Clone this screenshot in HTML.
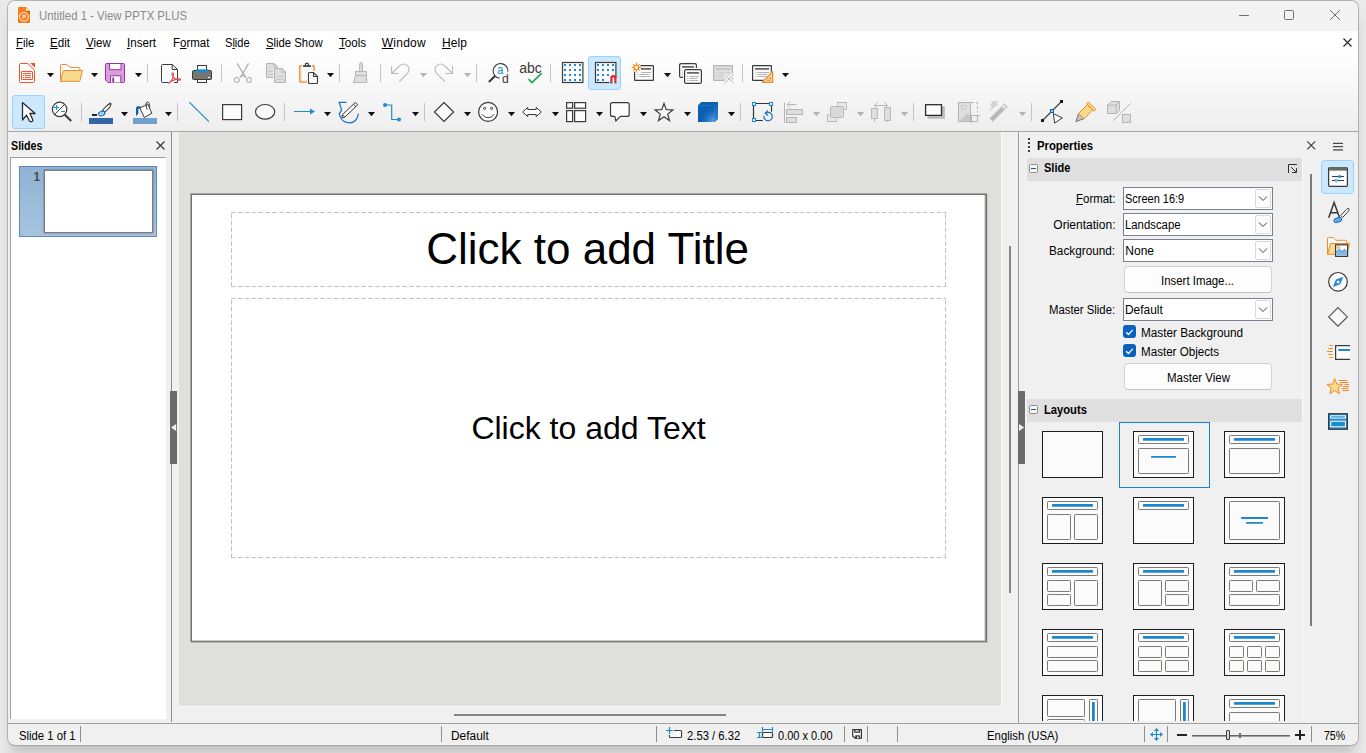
<!DOCTYPE html>
<html lang="en">
<head>
<meta charset="utf-8">
<title>Untitled 1 - View PPTX PLUS</title>
<style>
*{box-sizing:border-box;margin:0;padding:0}
html,body{width:1366px;height:753px;overflow:hidden}
body{background:#eaeaea;font-family:"Liberation Sans",sans-serif;font-size:12px;color:#000;position:relative}
.abs,.t,.ic,.sep,.dd{position:absolute}
#win{position:absolute;left:7px;top:0;width:1352px;height:746px;background:#f0f0f0;border:1px solid #b2b2b2;border-bottom-color:#a5a5a5;border-radius:8px;overflow:hidden;box-shadow:0 12px 14px -4px rgba(0,0,0,.18)}
#win>*{position:absolute}
/* everything inside #wrap uses page coordinates */
#wrap{left:-8px;top:-1px;width:1366px;height:753px}
#wrap>*{position:absolute}
#titlebar{left:8px;top:1px;width:1350px;height:30px;background:#f3f3f3}
#menubg{left:8px;top:31px;width:1350px;height:100px;background:linear-gradient(#ffffff 0,#fefefe 22px,#eeeeee 100%)}
#tbline{left:8px;top:131px;width:1350px;height:1px;background:#a6a6a6}
.t{white-space:nowrap;line-height:16px;font-size:12px;transform-origin:0 0}
.t u{text-decoration:underline;text-underline-offset:1px;text-decoration-thickness:1px}
.b{font-weight:bold}
.sep{width:1px;background:#c4c4c4}
.dd{width:0;height:0;border-left:3.5px solid transparent;border-right:3.5px solid transparent;border-top:4px solid #1a1a1a}
.dd.dis{border-top-color:#b0b0b0}
.ic{width:24px;height:24px;overflow:visible}
.hl{position:absolute;background:#cce8ff;border:1px solid #99d1ff;border-radius:3px}
#slidespanel{left:10px;top:157px;width:156px;height:562px;background:#fff;border-left:1px solid #a0a0a0;border-top:1px solid #a0a0a0}
#work{left:179px;top:132px;width:822px;height:574px;background:#dfdfde}
#slide{left:190px;top:193px;width:797px;height:449px;background:#fff;border:2px solid #6e6e6e;border-right-width:1px;border-bottom-width:1px;box-shadow:0 0 2px 0 rgba(0,0,0,.45)}
.ph{position:absolute;border:1px dashed #bdbdbd}
.combo{position:absolute;height:23px;width:150px;background:#fff;border:1px solid #7b8090}
.combo i{position:absolute;right:1px;top:1px;width:16px;height:19px;border:1px solid #d9d9d9;border-radius:2px;background:#fdfdfd}
.btn{position:absolute;background:#fdfdfd;border:1px solid #d2d2d2;border-radius:4px;border-bottom-color:#c2c2c2}
.band{position:absolute;background:#dfdfdf}
.cb{position:absolute;width:13px;height:13px;background:#0a62c0;border-radius:3px}
</style>
</head>
<body>
<div id="win"><div id="wrap">

<div id="titlebar"></div>
<div id="menubg"></div>
<div id="tbline"></div>
<!-- app icon -->
<svg class="abs" style="left:18px;top:7px" width="12" height="16" viewBox="0 0 12 16">
<path d="M1 0h7l4 4v11a1 1 0 0 1-1 1H1a1 1 0 0 1-1-1V1a1 1 0 0 1 1-1z" fill="#fb7c1b"/>
<path d="M8 0l4 4H8z" fill="#ffd3b0"/><path d="M8 4h4v2.500z" fill="#c85a0a"/>
<circle cx="5.900" cy="9.800" r="4.400" fill="none" stroke="#fff" stroke-width="1" opacity=".93"/>
<path d="M4.500 7.500h2.200a1.600 1.600 0 0 1 .3 3.100l-2.500 1.900z" fill="#ffd9bd" opacity=".85"/>
</svg>
<!-- window controls -->
<svg class="abs" style="left:1230px;top:1px" width="128" height="30" viewBox="0 0 128 30" fill="none" stroke="#6f6f6f" stroke-width="1">
<path d="M9 14.5h10"/><rect x="54.5" y="9.5" width="9" height="9" rx="1"/><path d="M100 9l10 10M110 9l-10 10"/>
</svg>
<!-- doc close -->
<svg class="abs" style="left:1341.500px;top:36.500px" width="11" height="11" viewBox="0 0 11 11" fill="none" stroke="#262626" stroke-width="1.100"><path d="M1.5 1.5l8 8M9.5 1.5l-8 8"/></svg>

<!-- slides panel -->
<svg class="abs" style="left:154.500px;top:139.500px" width="11" height="11" viewBox="0 0 11 11" fill="none" stroke="#333" stroke-width="1.1"><path d="M1.5 1.5l8 8M9.5 1.5l-8 8"/></svg>
<div id="slidespanel"></div>
<div class="abs" style="left:19px;top:166px;width:138px;height:71px;background:linear-gradient(#90b3d4,#a6c4df);border:1px solid #5f8ab5"></div>
<div class="abs" style="left:44px;top:170px;width:109px;height:63px;background:#fff;border:1px solid #7d7d7d;box-shadow:0 0 1.5px rgba(0,0,0,.6)"></div>
<!-- left splitter -->
<div class="abs" style="left:171px;top:132px;width:1px;height:590px;background:#8c8c8c"></div>
<div class="abs" style="left:170px;top:391px;width:7px;height:73px;background:#6b6b6b"></div>
<svg class="abs" style="left:170px;top:423px" width="7" height="9" viewBox="0 0 7 9"><path d="M6.2 1v7L1 4.5z" fill="#f2f2f2"/></svg>

<!-- workspace -->
<div id="work"></div>
<svg class="abs" style="left:188px;top:191px" width="802" height="454" viewBox="188 191 802 454" shape-rendering="crispEdges">
<rect x="191" y="194" width="796" height="448" fill="#fff"/>
<rect x="984" y="195" width="1" height="446" fill="#dcdcdc"/>
<rect x="192" y="640" width="794" height="1" fill="#c8c8c8"/>
<rect x="190" y="193" width="1" height="449" fill="#a6a6a4"/>
<rect x="190" y="193" width="797" height="1" fill="#a8a8a6"/>
<rect x="987" y="194" width="1" height="449" fill="#cbcbc9"/>
<rect x="191" y="642" width="797" height="1" fill="#b4b4b2"/>
<rect x="985" y="194" width="1" height="448" fill="#989898"/>
<rect x="191" y="194" width="1" height="448" fill="#727270"/>
<rect x="191" y="194" width="796" height="1" fill="#727270"/>
<rect x="986" y="194" width="1" height="448" fill="#727270"/>
<rect x="191" y="641" width="796" height="1" fill="#7c7c7a"/>
</svg>
<svg class="abs" style="left:228px;top:209px" width="722" height="353" viewBox="228 209 722 353" fill="none" stroke="#c1c1c1" stroke-width="1" stroke-dasharray="4.700 2.150">
<path d="M231 212.500h715M231 286.500h715M231 298.500h715M231 557.500h715"/>
<path d="M231.500 212v75M945.500 212v75M231.500 298v260M945.500 298v260" stroke-dashoffset="5.050"/>
</svg>
<!-- v scrollbar -->
<div class="abs" style="left:1001px;top:132px;width:17px;height:590px;background:#f0f0f0"></div>
<div class="abs" style="left:1009px;top:246px;width:2px;height:347px;background:#858585"></div>
<div class="abs" style="left:1001px;top:132px;width:1px;height:575px;background:#fbfbfb"></div>
<!-- h scrollbar -->
<div class="abs" style="left:179px;top:706px;width:822px;height:17px;background:#f0f0f0"></div>
<div class="abs" style="left:454px;top:714px;width:272px;height:2px;background:#858585"></div>
<div class="abs" style="left:179px;top:706px;width:823px;height:1px;background:#fbfbfb"></div>
<!-- right splitter -->
<div class="abs" style="left:1018px;top:132px;width:1px;height:591px;background:#a0a0a0"></div>
<div class="abs" style="left:1018px;top:391px;width:7px;height:73px;background:#6b6b6b"></div>
<svg class="abs" style="left:1018px;top:423px" width="7" height="9" viewBox="0 0 7 9"><path d="M1 1v7l5.2-3.5z" fill="#f2f2f2"/></svg>

<div class="hl" style="left:588px;top:56px;width:33px;height:34px"></div>
<div class="hl" style="left:12px;top:95px;width:33px;height:34px"></div>
<div class="sep" style="left:147px;top:64px;height:18px"></div>
<div class="sep" style="left:221px;top:64px;height:18px"></div>
<div class="sep" style="left:339px;top:64px;height:18px"></div>
<div class="sep" style="left:380px;top:64px;height:18px"></div>
<div class="sep" style="left:476px;top:64px;height:18px"></div>
<div class="sep" style="left:550px;top:64px;height:18px"></div>
<div class="sep" style="left:742px;top:64px;height:18px"></div>
<div class="sep" style="left:81px;top:103px;height:18px"></div>
<div class="sep" style="left:177px;top:103px;height:18px"></div>
<div class="sep" style="left:284px;top:103px;height:18px"></div>
<div class="sep" style="left:424px;top:103px;height:18px"></div>
<div class="sep" style="left:740px;top:103px;height:18px"></div>
<div class="sep" style="left:913px;top:103px;height:18px"></div>
<div class="sep" style="left:1031px;top:103px;height:18px"></div>
<svg class="abs" style="left:0;top:0" width="1366" height="132" viewBox="0 0 1366 132"><defs><radialGradient id="cubeg" cx="1" cy="1" r="1.05"><stop offset="0" stop-color="#6aaee6"/><stop offset=".45" stop-color="#2474c4"/><stop offset=".8" stop-color="#0a5fb0"/><stop offset="1" stop-color="#0a5fb0"/></radialGradient><linearGradient id="cubeh" x1="0" y1="0" x2="0" y2="1"><stop offset="0" stop-color="#0a5fb0"/><stop offset="1" stop-color="#3787d6"/></linearGradient></defs>
<path d="M47 73h7l-3.5 4.2z" fill="#111"/>
<path d="M91 73h7l-3.5 4.2z" fill="#111"/>
<path d="M135 73h7l-3.5 4.2z" fill="#111"/>
<path d="M327 73h7l-3.5 4.2z" fill="#111"/>
<path d="M664 73h7l-3.5 4.2z" fill="#111"/>
<path d="M782 73h7l-3.5 4.2z" fill="#111"/>
<path d="M420 73h7l-3.5 4.2z" fill="#b2b2b2"/>
<path d="M464 73h7l-3.5 4.2z" fill="#b2b2b2"/>
<path d="M121 112h7l-3.5 4.2z" fill="#111"/>
<path d="M165 112h7l-3.5 4.2z" fill="#111"/>
<path d="M324 112h7l-3.5 4.2z" fill="#111"/>
<path d="M368 112h7l-3.5 4.2z" fill="#111"/>
<path d="M412 112h7l-3.5 4.2z" fill="#111"/>
<path d="M464 112h7l-3.5 4.2z" fill="#111"/>
<path d="M508 112h7l-3.5 4.2z" fill="#111"/>
<path d="M552 112h7l-3.5 4.2z" fill="#111"/>
<path d="M596 112h7l-3.5 4.2z" fill="#111"/>
<path d="M640 112h7l-3.5 4.2z" fill="#111"/>
<path d="M684 112h7l-3.5 4.2z" fill="#111"/>
<path d="M728 112h7l-3.5 4.2z" fill="#111"/>
<path d="M813 112h7l-3.5 4.2z" fill="#b2b2b2"/>
<path d="M857 112h7l-3.5 4.2z" fill="#b2b2b2"/>
<path d="M901 112h7l-3.5 4.2z" fill="#b2b2b2"/>
<path d="M1019 112h7l-3.5 4.2z" fill="#b2b2b2"/>
<g fill="none" stroke="#e9572c"><path d="M20.2 63.5h7.6l6.7 6.7v11.3a1 1 0 0 1-1 1h-13.3a1 1 0 0 1-.7-1v-17a1 1 0 0 1 .7-1z" fill="#fdfdfd"/>
<path d="M30.2 63h4.8v4.8z" fill="#e8502a" stroke="none"/>
<rect x="21.5" y="71.5" width="11" height="8" rx=".4"/>
<path d="M23 73.6h8M24.6 75.6h6.4M24.6 77.6h6.4" stroke-width="1"/><path d="M23 75.1h1v1h-1zM23 77.1h1v1h-1z" fill="#e9572c" stroke="none"/></g>
<g stroke="#ee8733" stroke-linejoin="round"><path d="M60.5 81.3v-15.8a1 1 0 0 1 1-1h5.2l3.6 3h8.5a1 1 0 0 1 1 1v2" fill="#fcfcfc"/>
<path d="M60.5 81.3l2.9-10.8h19l-2.6 10.8z" fill="#f8dc8e"/></g>
<g><path d="M106.5 63.5h17a1 1 0 0 1 1 1v17a1 1 0 0 1-1 1h-15.5l-2.5-2.5v-15.5a1 1 0 0 1 1-1z" fill="#d99fe0" stroke="#9b2fa5"/>
<path d="M109.5 63.5h11.5v6.2h-11.5z" fill="#fcfcfc" stroke="#9b2fa5"/>
<path d="M110.5 82.5v-6.7h10.3v6.7" fill="#fcfcfc" stroke="#9b2fa5"/><rect x="112.3" y="77.5" width="1.8" height="5" fill="#9b2fa5"/></g>
<g fill="none"><path d="M174 82.5h3.5v-13l-5.2-5h-9.8a1 1 0 0 0-1 1v16a1 1 0 0 0 1 1h6" stroke="#3a3a38" fill="#fcfcfc"/><path d="M172.2 64.6v4.9h5.2" stroke="#3a3a38"/>
<path d="M168.5 83.6c2.6-2.2 5-6 5-9.6 0-1.600-1.500-1.600-1.500 0 0 3 3.500 6.200 7.600 6.200 1.300 0 1.300-1.300 0-1.300-3.800 0-8 1.600-11.100 4.700z" stroke="#e8474a" stroke-width="1.1"/></g>
<g><rect x="192.5" y="70.5" width="19" height="9" rx="1" fill="#777673" stroke="#3a3a38"/>
<rect x="197.5" y="65.5" width="9" height="5" fill="#fafafa" stroke="#3a3a38"/><rect x="196" y="69.3" width="12.400" height="3" fill="#1e8bcd"/>
<rect x="197.500" y="79.5" width="9" height="3" fill="#fafafa" stroke="#3a3a38"/><rect x="208" y="77" width="2" height="1" fill="#fff"/></g>
<g fill="none" stroke="#b0b0b0"><path d="M237.100 63.400l5.900 9.800 5.600-9.800" stroke-width="1.300"/><path d="M240.300 77.400l2.700-3.200 2.700 3.200" stroke-width="1.900"/><circle cx="236.800" cy="79.900" r="2.400" fill="#fbfbfb" stroke-width="1.100"/><circle cx="249" cy="79.900" r="2.400" fill="#fbfbfb" stroke-width="1.100"/></g>
<g stroke="#b4b4b4" fill="#dedede"><path d="M266.500 63.500h7.500l3.500 3.500v10.500h-11z"/><path d="M273.500 67.500h9l4 4v12h-13z" fill="#fbfbfb" stroke="none"/><path d="M274.500 68.500h7.500l3.500 3.500v10.500h-11z"/>
<path d="M268 71.500h5M268 74.500h5M276.500 76.500h7M276.500 79.500h7" stroke="#c6c6c6" fill="none"/><path d="M274 63.700v3.500h3.300zM282 68.700v3.500h3.300z" fill="#f2f2f2"/></g>
<g fill="none"><path d="M306.800 82h-6a1 1 0 0 1-1-1v-14.200a1 1 0 0 1 1-1h1M312.100 65.800h1a1 1 0 0 1 1 1v4.100" stroke="#ee8733" stroke-width="1.400"/>
<path d="M306.800 81h-5.500v-13.500M313.100 67.500v3.400" stroke="#fbe1a0" stroke-width=".8"/>
<rect x="303.100" y="65.100" width="7.800" height="1.800" fill="#3a3a38"/><circle cx="306.900" cy="64.600" r="1.500" fill="#f4f4f4" stroke="#3a3a38" stroke-width="1.100"/>
<path d="M308.500 82.500v-9a1 1 0 0 1 1-1h4l4 4v6a1 1 0 0 1-1 1h-7a1 1 0 0 1-1-1z" stroke="#3a3a38" stroke-width="1.100" fill="#fcfcfc"/><path d="M313.500 72.700v3.800h3.800" stroke="#3a3a38" stroke-width="1.100"/></g>
<g stroke="#b6b6b6" fill="#dedede"><path d="M359.700 71.500v-7.600a1.400 1.400 0 0 1 2.800 0v7.600"/><rect x="355.500" y="71.500" width="11" height="4"/><path d="M355.500 75.500h11l.4 7h-13.400z"/></g>
<path transform="translate(388,61)" d="M3.600 5.100v7.400h7.200M3.600 12.500l8.100-7.900a5.440 5.440 0 0 1 7.700 7.700l-8.100 8.400" fill="none" stroke="#b9b9b9" stroke-width="1.100"/>
<path transform="translate(456.1,61) scale(-1,1)" d="M3.600 5.100v7.400h7.200M3.600 12.500l8.100-7.900a5.440 5.440 0 0 1 7.700 7.700l-8.100 8.400" fill="none" stroke="#b9b9b9" stroke-width="1.100"/>
<g fill="none"><path d="M507.900 71.600a7.400 7.400 0 1 0-8.200 6.700" stroke="#3a3a38" stroke-width="1.100"/><path d="M495.200 75.700l-6.300 6.300" stroke="#3a3a38" stroke-width="2.100"/>
<text transform="translate(497.300 73.800) scale(.82 1)" font-family="Liberation Sans,sans-serif" font-size="13.300" fill="#1e8bcd">a</text><text transform="translate(502 83) scale(.9 1)" font-family="Liberation Sans,sans-serif" font-size="13.500" fill="#3a3a38">d</text></g>
<g><text x="519.200" y="72.700" font-family="Liberation Sans,sans-serif" font-size="14" fill="#3a3a38">abc</text><path d="M528.500 79.200l3.500 3.300 9.700-9.300" fill="none" stroke="#1aab4f" stroke-width="1.700"/></g>
<g><rect x="562.5" y="62.500" width="20.400" height="20" fill="#fcfcfc" stroke="#3a3a38" stroke-width="1.200"/><rect x="564.0" y="64" width="2" height="2" fill="#1e8bcd"/><rect x="569.0" y="64" width="2" height="2" fill="#1e8bcd"/><rect x="574.0" y="64" width="2" height="2" fill="#1e8bcd"/><rect x="579.0" y="64" width="2" height="2" fill="#1e8bcd"/><rect x="564.0" y="69" width="2" height="2" fill="#1e8bcd"/><rect x="569.0" y="69" width="2" height="2" fill="#1e8bcd"/><rect x="574.0" y="69" width="2" height="2" fill="#1e8bcd"/><rect x="579.0" y="69" width="2" height="2" fill="#1e8bcd"/><rect x="564.0" y="74" width="2" height="2" fill="#1e8bcd"/><rect x="569.0" y="74" width="2" height="2" fill="#1e8bcd"/><rect x="574.0" y="74" width="2" height="2" fill="#1e8bcd"/><rect x="579.0" y="74" width="2" height="2" fill="#1e8bcd"/><rect x="564.0" y="79" width="2" height="2" fill="#1e8bcd"/><rect x="569.0" y="79" width="2" height="2" fill="#1e8bcd"/><rect x="574.0" y="79" width="2" height="2" fill="#1e8bcd"/><rect x="579.0" y="79" width="2" height="2" fill="#1e8bcd"/></g>
<g><rect x="595.5" y="62.500" width="20.400" height="20" fill="#fcfcfc" stroke="#3a3a38" stroke-width="1.200"/><rect x="597.0" y="64" width="2" height="2" fill="#1e8bcd"/><rect x="602.0" y="64" width="2" height="2" fill="#1e8bcd"/><rect x="607.0" y="64" width="2" height="2" fill="#1e8bcd"/><rect x="612.0" y="64" width="2" height="2" fill="#1e8bcd"/><rect x="597.0" y="69" width="2" height="2" fill="#1e8bcd"/><rect x="602.0" y="69" width="2" height="2" fill="#1e8bcd"/><rect x="607.0" y="69" width="2" height="2" fill="#1e8bcd"/><rect x="612.0" y="69" width="2" height="2" fill="#1e8bcd"/><rect x="597.0" y="74" width="2" height="2" fill="#1e8bcd"/><rect x="602.0" y="74" width="2" height="2" fill="#1e8bcd"/><rect x="607.0" y="74" width="2" height="2" fill="#1e8bcd"/><rect x="597.0" y="79" width="2" height="2" fill="#1e8bcd"/><rect x="602.0" y="79" width="2" height="2" fill="#1e8bcd"/><rect x="609.5" y="78" width="7.500" height="6" fill="#fcfcfc"/><path d="M611.4 83.200v-5a2 2 0 0 1 4 0v5" fill="none" stroke="#e8212b" stroke-width="2.200"/><path d="M610.3 82.300h2.200v1.200h-2.200zM614.3 82.300h2.200v1.200h-2.200z" fill="#1e8bcd"/></g>
<g><rect x="634.6" y="65.6" width="18.8" height="14.8" rx="0.5" fill="#fcfcfc" stroke="#3a3a38" stroke-width="1.200"/><rect x="641" y="68" width="10" height="1.800" fill="#6b6965"/><rect x="641.5" y="72" width="9.5" height="1" fill="#b4b4b4"/><rect x="637.2" y="72" width="1" height="1" fill="#b4b4b4"/><rect x="639.2" y="74" width="10.3" height="1" fill="#b4b4b4"/><rect x="637.2" y="74" width="1" height="1" fill="#b4b4b4"/><rect x="639.2" y="76" width="11.100000000000001" height="1" fill="#b4b4b4"/><rect x="637.2" y="76" width="1" height="1" fill="#b4b4b4"/><circle cx="636.400" cy="67.400" r="4.600" fill="#fcfcfc"/><g stroke="#f58a1f" stroke-width="1.100" fill="none"><path d="M636.400 62.700v9.400M631.700 67.400h9.400M633.100 64.100l6.600 6.600M639.700 64.100l-6.600 6.600"/><circle cx="636.400" cy="67.400" r="2.200" fill="#fdfdfd"/></g></g>
<g><rect x="679.6" y="63.6" width="16.8" height="13.8" rx="1.5" fill="#fcfcfc" stroke="#3a3a38" stroke-width="1.200"/><rect x="682" y="66" width="12" height="1.800" fill="#6b6965"/><rect x="684.2" y="70" width="9.8" height="1" fill="#b4b4b4"/><rect x="682.2" y="70" width="1" height="1" fill="#b4b4b4"/><rect x="684.2" y="72" width="8.3" height="1" fill="#b4b4b4"/><rect x="682.2" y="72" width="1" height="1" fill="#b4b4b4"/><rect x="684.2" y="74" width="9.100000000000001" height="1" fill="#b4b4b4"/><rect x="682.2" y="74" width="1" height="1" fill="#b4b4b4"/><rect x="683" y="68" width="20" height="17" rx="2.5" fill="#fcfcfc"/><rect x="684.6" y="69.6" width="16.8" height="13.8" rx="1.5" fill="#fcfcfc" stroke="#3a3a38" stroke-width="1.200"/><rect x="687" y="72" width="12" height="1.800" fill="#6b6965"/><rect x="689.2" y="76" width="9.8" height="1" fill="#b4b4b4"/><rect x="687.2" y="76" width="1" height="1" fill="#b4b4b4"/><rect x="689.2" y="78" width="8.3" height="1" fill="#b4b4b4"/><rect x="687.2" y="78" width="1" height="1" fill="#b4b4b4"/><rect x="689.2" y="80" width="9.100000000000001" height="1" fill="#b4b4b4"/><rect x="687.2" y="80" width="1" height="1" fill="#b4b4b4"/></g>
<g><rect x="713.6" y="65.6" width="18.8" height="14.8" rx="0.5" fill="#dedede" stroke="#b4b4b4" stroke-width="1.200"/><rect x="716" y="68" width="14" height="1.800" fill="#c4c4c4"/><rect x="718.2" y="72" width="11.8" height="1" fill="#cfcfcf"/><rect x="716.2" y="72" width="1" height="1" fill="#cfcfcf"/><rect x="718.2" y="74" width="10.3" height="1" fill="#cfcfcf"/><rect x="716.2" y="74" width="1" height="1" fill="#cfcfcf"/><rect x="718.2" y="76" width="11.100000000000001" height="1" fill="#cfcfcf"/><rect x="716.2" y="76" width="1" height="1" fill="#cfcfcf"/><path d="M724.300 74l9.500 9.500M733.800 74l-9.500 9.500" stroke="#fafafa" stroke-width="3.400" fill="none"/><path d="M724.300 74l9.500 9.500M733.800 74l-9.500 9.500" stroke="#b4b4b4" stroke-width="1" fill="none"/></g>
<g><rect x="752.6" y="65.6" width="18.8" height="14.8" rx="0.5" fill="#fcfcfc" stroke="#3a3a38" stroke-width="1.200"/><rect x="755" y="68" width="14" height="1.800" fill="#6b6965"/><rect x="757.2" y="72" width="11.8" height="1" fill="#b4b4b4"/><rect x="755.2" y="72" width="1" height="1" fill="#b4b4b4"/><rect x="757.2" y="74" width="10.3" height="1" fill="#b4b4b4"/><rect x="755.2" y="74" width="1" height="1" fill="#b4b4b4"/><rect x="757.2" y="76" width="11.100000000000001" height="1" fill="#b4b4b4"/><rect x="755.2" y="76" width="1" height="1" fill="#b4b4b4"/><path d="M773.300 69.700v13.600h-13z" fill="#fbfbfb"/><path d="M772.600 71.600v10.800h-10.300z" fill="#fbe09a" stroke="#ee8733" stroke-width="1.300" stroke-linejoin="round"/><path d="M770.300 77v3.300h-3.200z" fill="#fdf8ee" stroke="#ee8733" stroke-width="1"/></g>
<path d="M22.500 102.600l12.600 10.900h-5.200l2.900 6.300q.400 1.200-1.100 1.700-1.500.600-2.200-.500l-3-5.800-4 4.800z" fill="#fcfcfc" stroke="#2a2a2a" stroke-width="1.300" stroke-linejoin="round"/>
<g fill="none"><circle cx="59.600" cy="109.400" r="7.200" stroke="#3a3a38" stroke-width="1.200" fill="#fcfcfc"/><path d="M54.600 114.400l10.300-10.300" stroke="#3a3a38"/><path d="M64.800 114.700l6.400 6.200" stroke="#3a3a38" stroke-width="2.100"/>
<path d="M54 107.500h5M56.500 105v5M61 111.500h4" stroke="#1e8bcd" stroke-width="1.200"/></g>
<g><rect x="89" y="118" width="24" height="6" fill="#3465a4"/><rect x="92" y="114" width="5" height="1.900" fill="#1a1a1a"/>
<path d="M110.700 103.100c.6 2-1 4.500-3 6.300l-3.200 2.900-2-2 3-3.300c1.800-1.900 3.600-3.500 5.200-3.900z" fill="#fcfcfc" stroke="#3a3a38" stroke-width="1.100" stroke-linejoin="round"/>
<ellipse cx="101.700" cy="113.500" rx="3.200" ry="2.100" transform="rotate(-20 101.700 113.500)" fill="#e8f2fb" stroke="#0f6cc0" stroke-width="1.200"/><path d="M100.300 114.200c.6-.9 1.600-1.300 2.800-1" stroke="#0f6cc0" fill="none" stroke-width=".8"/></g>
<g><rect x="133" y="118" width="24" height="6" fill="#729fcf"/>
<path d="M140.600 106.200h-2.400c-1.500 0-2.200.8-2.200 2.200v7.500l2.300-2.200v-4.700l2.300-1.300z" fill="#0a62b5"/>
<path d="M139.800 108l8.100-3.900 3.900 9.200-7.500 4.200z" fill="#fcfcfc" stroke="#3a3a38" stroke-linejoin="round"/>
<path d="M147.200 109.700c-1.300-3.600-1.900-7.100-.2-7.700 1.800-.600 3 2 2.600 6" fill="none" stroke="#3a3a38"/></g>
<path d="M189.300 102.100l19.600 19.500" stroke="#1e8bcd" stroke-width="1.200" fill="none"/>
<rect x="222.600" y="104.600" width="19" height="15" fill="#fcfcfc" stroke="#3a3a38" stroke-width="1.200"/>
<ellipse cx="265.100" cy="111.800" rx="9.600" ry="7.300" fill="#fcfcfc" stroke="#3a3a38" stroke-width="1.200"/>
<path d="M294 111.500h17" stroke="#1e8bcd" stroke-width="1.200"/><path d="M310 108.600l5 2.900-5 2.900z" fill="#1e8bcd"/>
<g fill="none"><path d="M346.500 102.300h-7.300l2.400 7.800-2.300 3.600c.6 4 3.400 8.900 10 9.100 5.400.2 9-4.500 9-9.300" stroke="#1a6fc0" stroke-width="1.200"/>
<path d="M355.200 102.500l2.600 2.300-13 12.300-2.900.6.500-3z" fill="#fcfcfc" stroke="#3a3a38" stroke-linejoin="round"/><path d="M353.300 104.300l2.600 2.300M342.500 114.800l2.300 2.200" stroke="#3a3a38"/></g>
<path d="M385 105h6.700v14.500h7" fill="none" stroke="#1e8bcd" stroke-width="1.200"/><circle cx="385" cy="105" r="2" fill="#1e8bcd"/><circle cx="399" cy="119.500" r="2" fill="#1e8bcd"/>
<path d="M444 102.500l9.600 9.500-9.600 9.500-9.600-9.500z" fill="#fcfcfc" stroke="#3a3a38" stroke-width="1.200"/>
<g fill="none" stroke="#3a3a38"><circle cx="488.100" cy="111.900" r="9.500" fill="#fcfcfc" stroke-width="1.200"/><circle cx="484.600" cy="108.400" r="1.100"/><circle cx="491.600" cy="108.400" r="1.100"/><path d="M482.200 114.300c1.500 2.200 3.400 3.300 5.900 3.300s4.400-1.100 5.900-3.300"/></g>
<path d="M522.700 112l5-4.600v2.100h8.500v-2.100l5 4.600-5 4.600v-2.100h-8.500v2.100z" fill="#fcfcfc" stroke="#3a3a38" stroke-linejoin="round"/>
<g fill="#fcfcfc" stroke="#3a3a38" stroke-width="1.200"><rect x="566.600" y="102.600" width="6" height="5.600"/><rect x="574.600" y="102.600" width="11" height="5.600"/><rect x="566.600" y="110.600" width="6" height="11"/><rect x="574.600" y="110.600" width="11" height="11"/></g>
<path d="M612.500 102.600h14.700a2 2 0 0 1 2 2v9.800a2 2 0 0 1-2 2h-6.800l-4.600 4.600-.9-4.600h-2.400a2 2 0 0 1-2-2v-9.800a2 2 0 0 1 2-2z" fill="#fcfcfc" stroke="#3a3a38" stroke-width="1.200" stroke-linejoin="round"/>
<path d="M664.0 103.5 L666.3 109.7 L672.9 110.0 L667.7 114.1 L669.5 120.5 L664.0 116.8 L658.5 120.5 L660.3 114.1 L655.1 110.0 L661.7 109.7z" fill="#fcfcfc" stroke="#3a3a38" stroke-width="1.200" stroke-linejoin="miter"/>
<g><path d="M698 105.200l3.300-3.300h16.700v16.800l-3.300 3.300h-16.700z" fill="#0a5fb0"/><rect x="698" y="105.200" width="16.700" height="16.800" fill="url(#cubeg)"/><path d="M714.700 105.200l3.300-3.300v16.800l-3.300 3.300z" fill="url(#cubeh)"/><path d="M698 105.400h16.600v16.600" fill="none" stroke="#4a94d8" stroke-width=".5" opacity=".8"/></g>
<g fill="none"><path d="M771.500 111.800v-8.300h-18v17h9.300" stroke="#333" stroke-width="1.200"/>
<g fill="#fcfcfc" stroke="#1e8bcd" stroke-width="1.100"><rect x="752.500" y="102.500" width="3" height="3"/><rect x="769.500" y="102.500" width="3" height="3"/><rect x="752.500" y="118.500" width="3" height="3"/></g>
<path d="M765.400 113.300a4.200 4.200 0 1 1-1.400 2.300" stroke="#1a6fc0" stroke-width="1.200"/><path d="M767.800 110.300l-2.600 3 3 2.300" stroke="#1a6fc0" stroke-width="1.200"/></g>
<g stroke="#b4b4b4" fill="#dedede"><path d="M784.500 102.700v20" fill="none"/><path d="M796.600 104.600h-9.500M790.300 101.400l-3.300 3.200 3.300 3.200" fill="none"/><rect x="786.500" y="109.500" width="16" height="5"/><rect x="786.500" y="117.500" width="10" height="5"/></g>
<g stroke="#b9b9b9" fill="none" stroke-linejoin="round"><path d="M837.500 105.500v-3h9v7h-2" fill="#e9e9e9"/><path d="M829.500 114.500h-2v7h9v-3" fill="#e9e9e9"/><rect x="830.500" y="106.500" width="13" height="11" rx="1" fill="#d8d8d8"/></g>
<g stroke="#b9b9b9" fill="#dedede"><rect x="871.500" y="108.500" width="6" height="10"/><rect x="884.500" y="107.500" width="6" height="13"/><path d="M874.500 118.500v3.500M887.500 120.500v1.500M874.500 105.500h13M877.700 102.200l-3.300 3.300 3.300 3.300M884.300 102.200l3.300 3.300-3.300 3.300" fill="none"/></g>
<rect x="927.500" y="106.500" width="17.400" height="12.300" fill="#bcbcbc"/><rect x="925.600" y="104.700" width="15.900" height="10.700" fill="#fdfdfd" stroke="#2d2d2d" stroke-width="1.300"/>
<g stroke="#b4b4b4" fill="none"><rect x="958.500" y="102.500" width="12" height="19" fill="#dedede"/><circle cx="963.500" cy="107.400" r="2.200" fill="#e4e4e4" stroke="#c4c4c4"/><path d="M959.500 121l7.500-7.500 1.500 1.500 1.500-1.500v7.500z" fill="#c6c6c6" stroke="none"/>
<path d="M971 102.500h6.500v10" stroke-dasharray="3 2"/><path d="M971.500 123.500v-8h8.500M977.500 115.500v6h-9.500"/></g>
<g><path d="M989.500 118.500l15-15 3.200 3.200-15 15z" fill="#b9b9b9"/><path d="M1001.500 107.300l3-3 2.300 2.300-3 3z" fill="#e2e2e2"/><path d="M992.500 101.300h6.300l-2.800 3h2.600l-10.200 7.200 3.600-5.400h-2.400z" fill="#d2d2d2"/></g>
<g><path d="M1042.500 120.500l19-19" stroke="#3a3a38" stroke-width="1.100"/><rect x="1041" y="119" width="3" height="3" fill="#1a1a1a"/><rect x="1060" y="100" width="3" height="3" fill="#1a1a1a"/>
<rect x="1050.600" y="109.600" width="2.800" height="2.800" fill="#fcfcfc" stroke="#0f62b5" stroke-width="1.200"/>
<path d="M1053.300 113.600l9 4.300-7.600 5.200z" fill="#fcfcfc" stroke="#3a3a38" stroke-linejoin="round"/></g>
<g stroke-linejoin="round"><path d="M1078.500 113.600l5.500 5.100-8.100 2.900z" fill="#c4c4c4" stroke="#777"/><path d="M1078.500 113.600l8.700-8.800 5.500 5.100-8.700 8.800z" fill="#f8dc8e" stroke="#f0882a"/><path d="M1086.500 103.700l1.800-1.600 7.600 7.200-1.700 1.800z" fill="#f8dc8e" stroke="#f0882a"/></g>
<g stroke="#b4b4b4" fill="#dedede"><path d="M1107.500 105.200l3.600-3.700h8.400v8.500l-3.300 3.500h-8.700z"/><path d="M1107.500 105.200h8.700v8.300M1116.200 105.200l3.300-3.700" fill="none"/><path d="M1113.200 120.700l17.600-17.500" fill="none"/><rect x="1122.500" y="114.500" width="8" height="8"/></g>
</svg>
<!-- sidebar -->
<svg class="abs" style="left:1028px;top:137px" width="3" height="16" viewBox="0 0 3 16" fill="#222"><rect x="0" y="1.200" width="2" height="1.700"/><rect x="0" y="5.200" width="2" height="1.700"/><rect x="0" y="9.200" width="2" height="1.700"/><rect x="0" y="13.200" width="2" height="1.700"/></svg>
<svg class="abs" style="left:1306px;top:140px" width="11" height="11" viewBox="0 0 11 11" fill="none" stroke="#333" stroke-width="1.1"><path d="M1.2 1.3l8 8M9.2 1.3l-8 8"/></svg>
<svg class="abs" style="left:1332px;top:142px" width="12" height="9" viewBox="0 0 12 9" fill="#333"><rect x="1" y="0.8" width="10" height="1.1"/><rect x="1" y="4.1" width="10" height="1.1"/><rect x="1" y="7.4" width="10" height="1.1"/></svg>
<div class="band" style="left:1027px;top:158px;width:275px;height:23px"></div>
<div class="band" style="left:1027px;top:399px;width:275px;height:23px"></div>
<svg class="abs" style="left:1029px;top:164px" width="9" height="9" viewBox="0 0 9 9"><rect x="0.5" y="0.5" width="8" height="8" rx="1" fill="#f6f6f6" stroke="#8d8d8d"/><rect x="2" y="4" width="5" height="1" fill="#2a4fae"/></svg>
<svg class="abs" style="left:1029px;top:405px" width="9" height="9" viewBox="0 0 9 9"><rect x="0.5" y="0.5" width="8" height="8" rx="1" fill="#f6f6f6" stroke="#8d8d8d"/><rect x="2" y="4" width="5" height="1" fill="#2a4fae"/></svg>
<svg class="abs" style="left:1288px;top:164px" width="9" height="9" viewBox="0 0 9 9" fill="none" stroke="#2e2e2e" stroke-width="1"><path d="M0.5 9v-8.5h8.5"/><path d="M3.2 3.2l5 5M8.5 4.2v4.3h-4.3"/></svg>
<div class="abs" style="left:1310px;top:174px;width:2px;height:452px;background:#7d7d7d"></div>
<!-- combos -->
<div class="combo" style="left:1123px;top:187px"><i></i></div>
<div class="combo" style="left:1123px;top:213px"><i></i></div>
<div class="combo" style="left:1123px;top:239px"><i></i></div>
<div class="combo" style="left:1123px;top:298px"><i></i></div>
<svg class="abs" style="left:1258px;top:195px" width="10" height="125" viewBox="0 0 10 125" fill="none" stroke="#444" stroke-width="1"><path d="M1 1.5l4 4 4-4M1 27.5l4 4 4-4M1 53.5l4 4 4-4M1 112.5l4 4 4-4"/></svg>
<div class="btn" style="left:1124px;top:266px;width:148px;height:27px"></div>
<div class="btn" style="left:1124px;top:363px;width:148px;height:27px"></div>
<div class="cb" style="left:1123px;top:325px"></div>
<div class="cb" style="left:1123px;top:344px"></div>
<svg class="abs" style="left:1123px;top:325.5px" width="13" height="31" viewBox="0 0 13 31" fill="none" stroke="#fff" stroke-width="1.3"><path d="M3.2 6.2l2.3 2.3 4.3-4.6M3.2 25.2l2.3 2.3 4.3-4.6"/></svg>
<!-- tab bar -->
<div class="hl" style="left:1321px;top:160px;width:33px;height:34px;border-radius:4px"></div>
<div class="abs" style="left:1302px;top:157px;width:1px;height:564px;background:#fbfbfb"></div>

<svg class="abs" style="left:1027px;top:422px" width="275" height="299" viewBox="0 0 275 299">
<rect x="92.5" y="0.5" width="90" height="65" fill="none" stroke="#1b7fd8"/>
<g transform="translate(15,9)"><rect x="0.5" y="0.5" width="60" height="46" fill="#fbfbfb" stroke="#1c1c1c"/></g>
<g transform="translate(106,9)"><rect x="0.5" y="0.5" width="60" height="46" fill="#fbfbfb" stroke="#1c1c1c"/><rect x="5.5" y="4.5" width="50" height="8" rx="0.8" fill="none" stroke="#7d7b78"/><rect x="10" y="7" width="41" height="2.8" rx="0.6" fill="#1c86d1"/><rect x="5.5" y="17.5" width="50" height="25" rx="0.8" fill="none" stroke="#7d7b78"/><rect x="18" y="25" width="25" height="1.8" rx="0.6" fill="#1c86d1"/></g>
<g transform="translate(197,9)"><rect x="0.5" y="0.5" width="60" height="46" fill="#fbfbfb" stroke="#1c1c1c"/><rect x="5.5" y="4.5" width="50" height="8" rx="0.8" fill="none" stroke="#7d7b78"/><rect x="10" y="7" width="41" height="2.8" rx="0.6" fill="#1c86d1"/><rect x="5.5" y="17.5" width="50" height="25" rx="0.8" fill="none" stroke="#7d7b78"/></g>
<g transform="translate(15,75)"><rect x="0.5" y="0.5" width="60" height="46" fill="#fbfbfb" stroke="#1c1c1c"/><rect x="5.5" y="4.5" width="50" height="8" rx="0.8" fill="none" stroke="#7d7b78"/><rect x="10" y="7" width="41" height="2.8" rx="0.6" fill="#1c86d1"/><rect x="5.5" y="17.5" width="23" height="25" rx="0.8" fill="none" stroke="#7d7b78"/><rect x="32.5" y="17.5" width="23" height="25" rx="0.8" fill="none" stroke="#7d7b78"/></g>
<g transform="translate(106,75)"><rect x="0.5" y="0.5" width="60" height="46" fill="#fbfbfb" stroke="#1c1c1c"/><rect x="5.5" y="4.5" width="50" height="8" rx="0.8" fill="none" stroke="#7d7b78"/><rect x="10" y="7" width="41" height="2.8" rx="0.6" fill="#1c86d1"/></g>
<g transform="translate(197,75)"><rect x="0.5" y="0.5" width="60" height="46" fill="#fbfbfb" stroke="#1c1c1c"/><rect x="5.5" y="4.5" width="50" height="38" rx="0.8" fill="none" stroke="#7d7b78"/><rect x="17" y="20" width="27" height="1.9" rx="0.6" fill="#1c86d1"/><rect x="22" y="25" width="17" height="1.8" rx="0.6" fill="#1c86d1"/></g>
<g transform="translate(15,141)"><rect x="0.5" y="0.5" width="60" height="46" fill="#fbfbfb" stroke="#1c1c1c"/><rect x="5.5" y="4.5" width="50" height="8" rx="0.8" fill="none" stroke="#7d7b78"/><rect x="10" y="7" width="41" height="2.8" rx="0.6" fill="#1c86d1"/><rect x="5.5" y="17.5" width="23" height="11" rx="0.8" fill="none" stroke="#7d7b78"/><rect x="5.5" y="31.5" width="23" height="11" rx="0.8" fill="none" stroke="#7d7b78"/><rect x="32.5" y="17.5" width="23" height="25" rx="0.8" fill="none" stroke="#7d7b78"/></g>
<g transform="translate(106,141)"><rect x="0.5" y="0.5" width="60" height="46" fill="#fbfbfb" stroke="#1c1c1c"/><rect x="5.5" y="4.5" width="50" height="8" rx="0.8" fill="none" stroke="#7d7b78"/><rect x="10" y="7" width="41" height="2.8" rx="0.6" fill="#1c86d1"/><rect x="5.5" y="17.5" width="23" height="25" rx="0.8" fill="none" stroke="#7d7b78"/><rect x="32.5" y="17.5" width="23" height="11" rx="0.8" fill="none" stroke="#7d7b78"/><rect x="32.5" y="31.5" width="23" height="11" rx="0.8" fill="none" stroke="#7d7b78"/></g>
<g transform="translate(197,141)"><rect x="0.5" y="0.5" width="60" height="46" fill="#fbfbfb" stroke="#1c1c1c"/><rect x="5.5" y="4.5" width="50" height="8" rx="0.8" fill="none" stroke="#7d7b78"/><rect x="10" y="7" width="41" height="2.8" rx="0.6" fill="#1c86d1"/><rect x="5.5" y="17.5" width="23" height="11" rx="0.8" fill="none" stroke="#7d7b78"/><rect x="32.5" y="17.5" width="23" height="11" rx="0.8" fill="none" stroke="#7d7b78"/><rect x="5.5" y="31.5" width="50" height="11" rx="0.8" fill="none" stroke="#7d7b78"/></g>
<g transform="translate(15,207)"><rect x="0.5" y="0.5" width="60" height="46" fill="#fbfbfb" stroke="#1c1c1c"/><rect x="5.5" y="4.5" width="50" height="8" rx="0.8" fill="none" stroke="#7d7b78"/><rect x="10" y="7" width="41" height="2.8" rx="0.6" fill="#1c86d1"/><rect x="5.5" y="17.5" width="50" height="11" rx="0.8" fill="none" stroke="#7d7b78"/><rect x="5.5" y="31.5" width="50" height="11" rx="0.8" fill="none" stroke="#7d7b78"/></g>
<g transform="translate(106,207)"><rect x="0.5" y="0.5" width="60" height="46" fill="#fbfbfb" stroke="#1c1c1c"/><rect x="5.5" y="4.5" width="50" height="8" rx="0.8" fill="none" stroke="#7d7b78"/><rect x="10" y="7" width="41" height="2.8" rx="0.6" fill="#1c86d1"/><rect x="5.5" y="17.5" width="23" height="11" rx="0.8" fill="none" stroke="#7d7b78"/><rect x="32.5" y="17.5" width="23" height="11" rx="0.8" fill="none" stroke="#7d7b78"/><rect x="5.5" y="31.5" width="23" height="11" rx="0.8" fill="none" stroke="#7d7b78"/><rect x="32.5" y="31.5" width="23" height="11" rx="0.8" fill="none" stroke="#7d7b78"/></g>
<g transform="translate(197,207)"><rect x="0.5" y="0.5" width="60" height="46" fill="#fbfbfb" stroke="#1c1c1c"/><rect x="5.5" y="4.5" width="50" height="8" rx="0.8" fill="none" stroke="#7d7b78"/><rect x="10" y="7" width="41" height="2.8" rx="0.6" fill="#1c86d1"/><rect x="5.5" y="17.5" width="14" height="11" rx="0.8" fill="none" stroke="#7d7b78"/><rect x="23.5" y="17.5" width="14" height="11" rx="0.8" fill="none" stroke="#7d7b78"/><rect x="41.5" y="17.5" width="14" height="11" rx="0.8" fill="none" stroke="#7d7b78"/><rect x="5.5" y="31.5" width="14" height="11" rx="0.8" fill="none" stroke="#7d7b78"/><rect x="23.5" y="31.5" width="14" height="11" rx="0.8" fill="none" stroke="#7d7b78"/><rect x="41.5" y="31.5" width="14" height="11" rx="0.8" fill="none" stroke="#7d7b78"/></g>
<g transform="translate(15,273)"><rect x="0.5" y="0.5" width="60" height="46" fill="#fbfbfb" stroke="#1c1c1c"/><rect x="47.5" y="4.5" width="8" height="38" rx="0.8" fill="none" stroke="#7d7b78"/><rect x="50" y="7" width="2.8" height="33" rx="0.6" fill="#1c86d1"/><rect x="5.5" y="4.5" width="37" height="17" rx="0.8" fill="none" stroke="#7d7b78"/><rect x="5.5" y="24.5" width="37" height="18" rx="0.8" fill="none" stroke="#7d7b78"/></g>
<g transform="translate(106,273)"><rect x="0.5" y="0.5" width="60" height="46" fill="#fbfbfb" stroke="#1c1c1c"/><rect x="47.5" y="4.5" width="8" height="38" rx="0.8" fill="none" stroke="#7d7b78"/><rect x="50" y="7" width="2.8" height="33" rx="0.6" fill="#1c86d1"/><rect x="5.5" y="4.5" width="37" height="38" rx="0.8" fill="none" stroke="#7d7b78"/></g>
<g transform="translate(197,273)"><rect x="0.5" y="0.5" width="60" height="46" fill="#fbfbfb" stroke="#1c1c1c"/><rect x="5.5" y="4.5" width="50" height="8" rx="0.8" fill="none" stroke="#7d7b78"/><rect x="10" y="7" width="41" height="2.8" rx="0.6" fill="#1c86d1"/><rect x="5.5" y="17.5" width="50" height="11" rx="0.8" fill="none" stroke="#7d7b78"/><rect x="5.5" y="31.5" width="50" height="11" rx="0.8" fill="none" stroke="#7d7b78"/></g>
</svg>
<svg class="abs" style="left:1320px;top:160px" width="38" height="275" viewBox="1320 160 38 275">
<!-- properties -->
<rect x="1328.600" y="167.800" width="18.800" height="18.600" rx=".8" fill="#fcfcfc" stroke="#3a3a38" stroke-width="1.200"/><rect x="1329" y="168" width="18" height="2.600" fill="#6b6965"/>
<path d="M1332 176.500h12M1332 180.500h12" stroke="#3a3a38" stroke-width="1"/><circle cx="1339.600" cy="176.500" r="1.600" fill="#1e8bcd"/><circle cx="1336.300" cy="180.500" r="1.300" fill="#cfe6f7" stroke="#1e8bcd" stroke-width=".9"/>
<!-- styles -->
<path d="M1328.700 217.800l5.400-15.400 5.500 15.400M1330.600 212.800h7" fill="none" stroke="#3a3a38" stroke-width="1.500"/>
<path d="M1348.600 208.200c.9 1.200.1 2.700-.9 3.800l-5 5.400-2-1.900 5.200-5.500c.9-.9 1.900-1.800 2.700-1.800z" fill="#fcfcfc" stroke="#3a3a38" stroke-width="1" stroke-linejoin="round"/>
<ellipse cx="1337.800" cy="220.100" rx="3.900" ry="2.100" transform="rotate(-18 1337.800 220.100)" fill="#8ec3ee" stroke="#0f6cc0" stroke-width="1.100"/><path d="M1335.800 221c1.200-.2 2.500-.8 3.400-1.700" stroke="#0f6cc0" stroke-width=".7" fill="none"/>
<!-- gallery -->
<g stroke="#ee8733" stroke-linejoin="round"><path d="M1327.500 254.300v-15.700a1 1 0 0 1 1-1h4.700l2.800 2.700h9.800a1 1 0 0 1 1 1v2" fill="#fcfcfc"/><path d="M1327.500 254.300l3-10.800h19l-2.600 10.800z" fill="#f8dc8e"/></g>
<rect x="1335.600" y="244.800" width="12" height="11.600" fill="#fcfcfc" stroke="#3a3a38" stroke-width="1.200"/><path d="M1336.200 255.800v-3.600l3.300-3 2.600 2.500 2.400-2.500 2.500 2.500v4.100z" fill="#84b9e8"/><path d="M1336.200 252.200l3.300-3 2.600 2.500 2.400-2.500 2.500 2.500" fill="none" stroke="#1e8bcd" stroke-width="1"/><circle cx="1338.500" cy="247.400" r="1" fill="#fdf3e4" stroke="#f0882a" stroke-width=".8"/>
<!-- navigator -->
<circle cx="1338" cy="281.800" r="9.300" fill="#fcfcfc" stroke="#3a3a38" stroke-width="1.200"/><path d="M1343.300 276.800l-3 7.400-7.400 2.800 3-7.400z" fill="#1e8bcd"/><circle cx="1338.100" cy="281.900" r="1.500" fill="#fcfcfc"/>
<!-- shapes -->
<path d="M1338 307.600l9.300 9.300-9.300 9.300-9.300-9.300z" fill="#fafafa" stroke="#555" stroke-width="1.200"/>
<!-- slide transition -->
<path d="M1350 345.600h-14.400v13.800h14.400" fill="#fcfcfc" stroke="#3a3a38" stroke-width="1.200"/><rect x="1338.200" y="349" width="11.800" height="2" fill="#1e8bcd"/>
<path d="M1329.400 345.500h3.400M1328.200 348.500h4.600M1327 351.500h5.800M1328.200 354.500h4.600M1329.400 357.500h3.400" stroke="#f58a1f" stroke-width="1"/>
<!-- animation -->
<path d="M1334.700 378.600l2.100 5.500 5.700.3-4.400 3.700 1.500 5.600-4.900-3.100-4.900 3.100 1.500-5.600-4.400-3.700 5.700-.3z" fill="#f8dc8e" stroke="#f0882a" stroke-width="1" stroke-linejoin="round"/>
<path d="M1338.200 380.500h9M1340 382.500h8.500M1344.500 384.500h4.500M1342.800 386.500h6.200M1341.400 388.500h6.600M1342.300 390.500h6.700" stroke="#f58a1f" stroke-width="1"/>
<!-- master slides -->
<rect x="1328.600" y="413.700" width="18.800" height="15.600" fill="#1e8bcd" stroke="#3a3a38" stroke-width="1.200"/><rect x="1330.700" y="415.800" width="14.700" height="2.300" fill="none" stroke="#fff" stroke-width="1"/><rect x="1330.700" y="421.200" width="14.700" height="5.600" fill="none" stroke="#fff" stroke-width="1"/>
</svg>

<!-- status bar -->
<div class="abs" style="left:8px;top:723px;width:1350px;height:1px;background:#a0a0a0"></div>
<div class="sep" style="left:80px;top:726px;height:16px;background:#8f8f8f"></div>
<div class="sep" style="left:441px;top:726px;height:16px;background:#8f8f8f"></div>
<div class="sep" style="left:656px;top:726px;height:16px;background:#8f8f8f"></div>
<div class="sep" style="left:844px;top:726px;height:16px;background:#8f8f8f"></div>
<div class="sep" style="left:867px;top:726px;height:16px;background:#8f8f8f"></div>
<div class="sep" style="left:897px;top:726px;height:16px;background:#8f8f8f"></div>
<div class="sep" style="left:1144px;top:726px;height:16px;background:#8f8f8f"></div>
<div class="sep" style="left:1167px;top:726px;height:16px;background:#8f8f8f"></div>
<div class="sep" style="left:1311px;top:726px;height:16px;background:#8f8f8f"></div>
<!-- zoom slider -->
<div class="abs" style="left:1177px;top:734px;width:10px;height:2px;background:#222"></div>
<div class="abs" style="left:1295px;top:734px;width:10px;height:2px;background:#222"></div>
<div class="abs" style="left:1299px;top:730px;width:2px;height:10px;background:#222"></div>
<div class="abs" style="left:1192px;top:735px;width:98px;height:2px;background:linear-gradient(#666 0,#666 50%,#a2a2a2 50%,#a2a2a2 100%)"></div>
<div class="abs" style="left:1239px;top:733px;width:2px;height:5px;background:#6a6a6a"></div>
<div class="abs" style="left:1226px;top:730px;width:4px;height:10px;background:#dedcda;border:1px solid #3a3a38;border-radius:1px"></div>
<!-- status icons -->
<svg class="abs" style="left:664px;top:725px" width="200" height="17" viewBox="664 725 200 17" fill="none">
<path d="M669.500 727v7M666 730.500h7" stroke="#1e8bcd" stroke-width="1.200"/><path d="M674 730.500h6.500a1 1 0 0 1 1 1v5a1 1 0 0 1-1 1h-10a1 1 0 0 1-1-1v-1.500" stroke="#3a3a38" stroke-width="1.200"/><path d="M674 731.100h6.900v5.800h-10.800v-1.900h3.900z" fill="#fafafa"/>
<path d="M762.500 727v5M772.500 727v5M762.500 729.500h10M759.500 732.500v5M757 732.500h5M757 737.500h5" stroke="#1e8bcd" stroke-width="1.200"/><rect x="762.500" y="732.500" width="10" height="5" rx="1" fill="#fcfcfc" stroke="#3a3a38" stroke-width="1.200"/>
<path d="M852.700 729.700h8.700v8.500h-6.500l-2.200-2.200z" fill="#fcfcfc" stroke="#333" stroke-width="1.200" stroke-linejoin="round"/><path d="M854.800 729.700v2.500h4.600v-2.500" stroke="#333" stroke-width="1.200"/><rect x="855.200" y="735.300" width="4.700" height="3.200" fill="#333"/><rect x="857" y="736.500" width="1.700" height="1.700" fill="#fcfcfc"/>
</svg>
<svg class="abs" style="left:1150px;top:728px" width="13" height="13" viewBox="0 0 13 13"><path d="M6.500 2v9M2 6.500h9" stroke="#1e8bcd" stroke-width="1.200" fill="none"/><path d="M6.500 0l2.600 2.900h-5.200zM6.500 13l2.600-2.900h-5.200zM0 6.500l2.900-2.600v5.200zM13 6.500l-2.900-2.600v5.200z" fill="#1e8bcd"/></svg>

<!-- texts -->
<div class="t" style="transform:scaleX(0.9456);left:38.5px;top:7.6px;color:#8a8a8a">Untitled 1 - View PPTX PLUS</div>
<div class="t" style="transform:scaleX(0.9401);left:16.2px;top:34.6px"><u>F</u>ile</div>
<div class="t" style="transform:scaleX(0.9660);left:50.0px;top:34.6px"><u>E</u>dit</div>
<div class="t" style="transform:scaleX(0.9608);left:86.0px;top:34.6px"><u>V</u>iew</div>
<div class="t" style="transform:scaleX(0.9657);left:127.0px;top:34.6px"><u>I</u>nsert</div>
<div class="t" style="transform:scaleX(0.9571);left:172.6px;top:34.6px">F<u>o</u>rmat</div>
<div class="t" style="transform:scaleX(0.9212);left:225.4px;top:34.6px">S<u>l</u>ide</div>
<div class="t" style="transform:scaleX(0.9426);left:266.2px;top:34.6px"><u>S</u>lide Show</div>
<div class="t" style="transform:scaleX(0.9709);left:339.0px;top:34.6px"><u>T</u>ools</div>
<div class="t" style="letter-spacing:0.223px;left:381.8px;top:34.6px"><u>W</u>indow</div>
<div class="t" style="letter-spacing:0.071px;left:442.0px;top:34.6px"><u>H</u>elp</div>
<div class="t b" style="transform:scaleX(0.8909);left:11.0px;top:137.6px">Slides</div>
<div class="t b" style="left:33.5px;top:168.8px;color:#4a4a4a">1</div>
<div class="t" style="left:426.2px;top:222.3px;font-size:44px;line-height:53px">Click to add Title</div>
<div class="t" style="left:471.4px;top:408.9px;font-size:32px;line-height:38px">Click to add Text</div>
<div class="t b" style="transform:scaleX(0.9434);left:1037.2px;top:137.6px">Properties</div>
<div class="t b" style="transform:scaleX(0.9203);left:1043.8px;top:160.3px">Slide</div>
<div class="t" style="transform:scaleX(0.9550);left:1076.0px;top:191.3px"><u>F</u>ormat:</div>
<div class="t" style="letter-spacing:0.014px;left:1053.3px;top:217.3px">Orientation:</div>
<div class="t" style="transform:scaleX(0.9808);left:1049.4px;top:243.3px">Background:</div>
<div class="t" style="transform:scaleX(0.9439);left:1049.4px;top:302.3px">Master Slide:</div>
<div class="t" style="transform:scaleX(0.9147);left:1125.3px;top:191.3px">Screen 16:9</div>
<div class="t" style="transform:scaleX(0.9452);left:1125.3px;top:217.3px">Landscape</div>
<div class="t" style="left:1125.3px;top:243.3px">None</div>
<div class="t" style="transform:scaleX(0.9913);left:1125.3px;top:302.3px">Default</div>
<div class="t" style="transform:scaleX(0.9517);left:1161.0px;top:273.3px">Insert Image...</div>
<div class="t" style="transform:scaleX(0.9573);left:1166.5px;top:370.3px">Master View</div>
<div class="t" style="transform:scaleX(0.9811);left:1140.9px;top:325.3px">Master Background</div>
<div class="t" style="transform:scaleX(0.9677);left:1140.9px;top:344.3px">Master Objects</div>
<div class="t b" style="transform:scaleX(0.9323);left:1043.9px;top:402.3px">Layouts</div>
<div class="t" style="transform:scaleX(0.9409);left:18.9px;top:727.8px">Slide 1 of 1</div>
<div class="t" style="transform:scaleX(0.9939);left:451.4px;top:727.8px">Default</div>
<div class="t" style="transform:scaleX(0.9380);left:687.2px;top:727.8px">2.53 / 6.32</div>
<div class="t" style="transform:scaleX(0.9193);left:778.0px;top:727.8px">0.00 x 0.00</div>
<div class="t" style="transform:scaleX(0.9475);left:986.8px;top:727.8px">English (USA)</div>
<div class="t" style="transform:scaleX(0.8780);left:1323.7px;top:727.8px">75%</div>
</div></div>
</body>
</html>
